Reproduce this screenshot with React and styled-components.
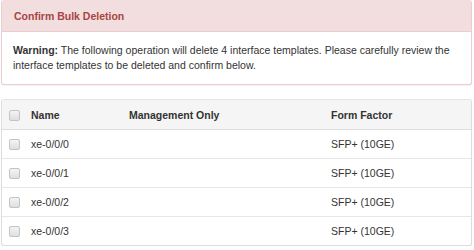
import styled, { createGlobalStyle } from 'styled-components';

const GlobalStyle = createGlobalStyle`
  body {
    margin: 0;
    background: #ffffff;
    font-family: "Liberation Sans", Arial, sans-serif;
    font-size: 10.5px;
    color: #333333;
  }
`;

const Page = styled.div`
  padding: 0 2px 0 1px;
`;

const Panel = styled.div`
  border: 1px solid ${props => props.danger ? '#ebccd1' : '#dddddd'};
  border-top: ${props => props.danger ? 'none' : '1px solid #e4e4e4'};
  border-radius: 3px;
  background: #ffffff;
  margin-bottom: ${props => props.last ? '0' : '14px'};
  box-shadow: 0 1px 1px rgba(0, 0, 0, 0.05);
  overflow: hidden;
`;

const PanelHeading = styled.div`
  background: #f2dede;
  color: #a94442;
  border-bottom: 1px solid #ebccd1;
  font-weight: bold;
  height: 31px;
  line-height: 32px;
  padding: 0 12px;
`;

const PanelBody = styled.div`
  padding: 11px 11px 11px;
  line-height: 15px;
`;

const Table = styled.table`
  width: 100%;
  border-collapse: collapse;
`;

const HeadRow = styled.tr`
  background: #f5f5f5;
`;

const Th = styled.th`
  text-align: left;
  font-weight: bold;
  height: 29px;
  padding: 0 6px 0 ${props => props.pad || 0}px;
  width: ${props => props.w || 'auto'};
  border-bottom: 1px solid #dddddd;
`;

const Td = styled.td`
  height: 28px;
  padding: 0 6px 0 ${props => props.pad || 0}px;
  border-top: 1px solid #e6e6e6;
`;

const Check = styled.span`
  display: inline-block;
  width: 9px;
  height: 9px;
  border: 1px solid #c4c4c4;
  border-radius: 2px;
  background: linear-gradient(#f4f4f4, #dedede);
  vertical-align: middle;
`;

const rows = ['xe-0/0/0', 'xe-0/0/1', 'xe-0/0/2', 'xe-0/0/3'];

export default function App() {
  return (
    <Page>
      <GlobalStyle />
      <Panel danger>
        <PanelHeading>Confirm Bulk Deletion</PanelHeading>
        <PanelBody>
          <strong>Warning:</strong> The following operation will delete 4 interface templates. Please carefully review the interface templates to be deleted and confirm below.
        </PanelBody>
      </Panel>
      <Panel last>
        <Table>
          <thead>
            <HeadRow>
              <Th pad={7} w="16px"><Check /></Th>
              <Th w="92px">Name</Th>
              <Th w="196px">Management Only</Th>
              <Th>Form Factor</Th>
            </HeadRow>
          </thead>
          <tbody>
            {rows.map((name, i) => (
              <tr key={name}>
                <Td pad={7} style={i === 0 ? { borderTop: 'none' } : undefined}><Check /></Td>
                <Td>{name}</Td>
                <Td></Td>
                <Td>SFP+ (10GE)</Td>
              </tr>
            ))}
          </tbody>
        </Table>
      </Panel>
    </Page>
  );
}
